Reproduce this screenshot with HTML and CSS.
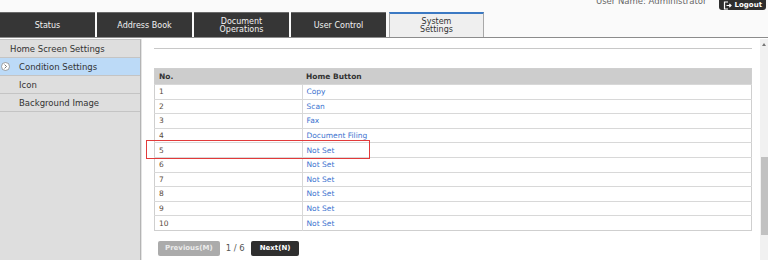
FILE: index.html
```html
<!DOCTYPE html>
<html lang="en">
<head>
    <meta charset="UTF-8">
    <title>System Settings - Home Screen</title>
    <link rel="stylesheet" href="styles.css">
</head>
<body>

    <!-- top strip with user name + logout -->
    <div class="topbar">
        <div class="user-name">User Name: Administrator</div>
        <div class="logout">
            <svg width="9" height="9" viewBox="0 0 9 9">
                <path d="M5 1H1.5v7H5" fill="none" stroke="#fff" stroke-width="1.2"/>
                <path d="M3.5 4.5H8M6.3 2.8L8 4.5 6.3 6.2" fill="none" stroke="#fff" stroke-width="1.2"/>
            </svg>
            Logout
        </div>
    </div>

    <!-- main tabs -->
    <div class="tabs">
        <div class="tab">Status</div>
        <div class="tab">Address Book</div>
        <div class="tab">Document<br>Operations</div>
        <div class="tab">User Control</div>
        <div class="tab active">System<br>Settings</div>
    </div>

    <div class="main">
        <div class="sidebar">
            <div class="side-item top">Home Screen Settings</div>
            <div class="side-item selected">
                <span class="arrow-icon">
                    <svg width="9" height="9" viewBox="0 0 9 9">
                        <circle cx="4.5" cy="4.5" r="4" fill="#fff" stroke="#888" stroke-width="0.8"/>
                        <path d="M3.6 2.6L5.5 4.5 3.6 6.4" fill="none" stroke="#666" stroke-width="0.9"/>
                    </svg>
                </span>
                Condition Settings
            </div>
            <div class="side-item">Icon</div>
            <div class="side-item">Background Image</div>
        </div>

        <div class="content">
            <div class="rule"></div>

            <table class="home-table">
                <tr>
                    <th class="col-no">No.</th>
                    <th>Home Button</th>
                </tr>
                <tr><td>1</td><td><a>Copy</a></td></tr>
                <tr><td>2</td><td><a>Scan</a></td></tr>
                <tr><td>3</td><td><a>Fax</a></td></tr>
                <tr><td>4</td><td><a>Document Filing</a></td></tr>
                <tr><td>5</td><td><a>Not Set</a></td></tr>
                <tr><td>6</td><td><a>Not Set</a></td></tr>
                <tr><td>7</td><td><a>Not Set</a></td></tr>
                <tr><td>8</td><td><a>Not Set</a></td></tr>
                <tr><td>9</td><td><a>Not Set</a></td></tr>
                <tr><td>10</td><td><a>Not Set</a></td></tr>
            </table>

            <div class="pager">
                <div class="btn disabled">Previous(M)</div>
                <div class="page-num">1 / 6</div>
                <div class="btn">Next(N)</div>
            </div>

            <div class="highlight"></div> <!-- red marker around row 5 -->
        </div>

        <div class="scrollbar">
            <div class="scroll-up"></div>
            <div class="scroll-thumb"></div>
        </div>
    </div>

</body>
</html>
```

FILE: styles.css
```css
body {
    margin: 0;
    font-family: "DejaVu Sans", Verdana, sans-serif;
    font-size: 8px;
    color: #333;
    background-color: #fff;
    width: 768px;
    height: 260px;
    overflow: hidden;
}

/* Top strip */
.topbar {
    height: 11px;
    display: flex;
    justify-content: flex-end;
    align-items: flex-end;
    background-color: #fafafa;
}

.user-name {
    color: #666;
    font-size: 8.5px;
    margin-right: 12px;
    margin-bottom: 5px;
}

.logout {
    display: flex;
    align-items: center;
    gap: 3px;
    background-color: #2e2e2e;
    color: #fff;
    font-weight: bold;
    font-size: 7px;
    height: 10px;
    padding: 0 4px;
    margin-right: 2px;
    margin-bottom: 1px;
    border-radius: 0 0 3px 3px;
}

/* Tabs */
.tabs {
    display: flex;
    gap: 2px;
    height: 26px;
    border-bottom: 1px solid #8c8c8c;
    background-color: #fafafa;
}

.tab {
    width: 95px;
    display: flex;
    align-items: center;
    justify-content: center;
    text-align: center;
    line-height: 8px;
    background-color: #363636;
    color: #f2f2f2;
    font-size: 8px;
    padding-top: 1px;
    margin-top: 1px;
    border-top: 1px solid #6a6a6a;
    box-sizing: border-box;
}

.tab.active {
    margin-left: 1px;
    background-color: #efefef;
    color: #333;
    border: 1px solid #a8a8a8;
    border-top: 2px solid #3b79c3;
    border-bottom: none;
}

/* Layout below tabs */
.main {
    display: flex;
    height: 222px;
    padding-top: 1px;
}

.sidebar {
    width: 140px;
    background-color: #dedede;
    border-right: 1px solid #b4b4b4;
    border-top: 1px solid #c4c4c4;
}

.side-item {
    height: 17px;
    display: flex;
    align-items: center;
    padding-left: 19px;
    border-bottom: 1px solid #c4c4c4;
    font-size: 8.5px;
    color: #333;
}

.side-item.top {
    padding-left: 10px;
}

.side-item.selected {
    background-color: #bcdaf7;
    padding-left: 1px;
}

.arrow-icon {
    display: flex;
    width: 9px;
    margin-right: 9px;
}

.content {
    flex: 1;
    position: relative; /* reference for the red marker */
    padding: 9px 8px 0 12px;
    border-left: 1px solid #e4e4e4;
}

.rule {
    height: 1px;
    background-color: #c8c8c8;
}

.home-table {
    width: 100%;
    margin-top: 19px;
    border-collapse: collapse;
    border: 1px solid #cfcfcf;
}

.home-table th {
    background-color: #cdcdcd;
    text-align: left;
    font-weight: bold;
    height: 15px;
    padding: 0 0 0 4px;
    color: #333;
    font-size: 7.5px;
}

.home-table .col-no {
    width: 143px;
}

.home-table td {
    height: 13.6px;
    padding: 0 0 0 4px;
    border-top: 1px solid #d8d8d8;
    font-size: 7.5px;
    color: #5a4a3a;
}

.home-table td + td {
    border-left: 1px solid #d8d8d8;
}

.home-table a {
    color: #3d73cf;
}

.pager {
    display: flex;
    align-items: center;
    margin-top: 10px;
    padding-left: 4px;
}

.btn {
    height: 15px;
    padding: 0 9px;
    display: flex;
    align-items: center;
    background-color: #2f2f2f;
    color: #fff;
    font-weight: bold;
    font-size: 7px;
    border-radius: 2px;
}

.btn.disabled {
    background-color: #ababab;
    color: #ececec;
    padding: 0 7px;
}

.page-num {
    margin: 0 6px;
    color: #555;
    font-size: 8.5px;
}

/* red marker around row 5 */
.highlight {
    position: absolute;
    left: 4px;
    top: 101px;
    width: 222px;
    height: 17px;
    border: 1px solid #e23a3a;
}

/* fake scrollbar */
.scrollbar {
    width: 8px;
    background-color: #f1f1f1;
    display: flex;
    flex-direction: column;
    align-items: center;
}

.scroll-up {
    margin-top: 4px;
    width: 0;
    height: 0;
    border-left: 2px solid transparent;
    border-right: 2px solid transparent;
    border-bottom: 3px solid #777;
}

.scroll-thumb {
    margin-top: 111px;
    width: 7px;
    height: 78px;
    background-color: #c1c1c1;
    margin-left: 1px;
}
```
